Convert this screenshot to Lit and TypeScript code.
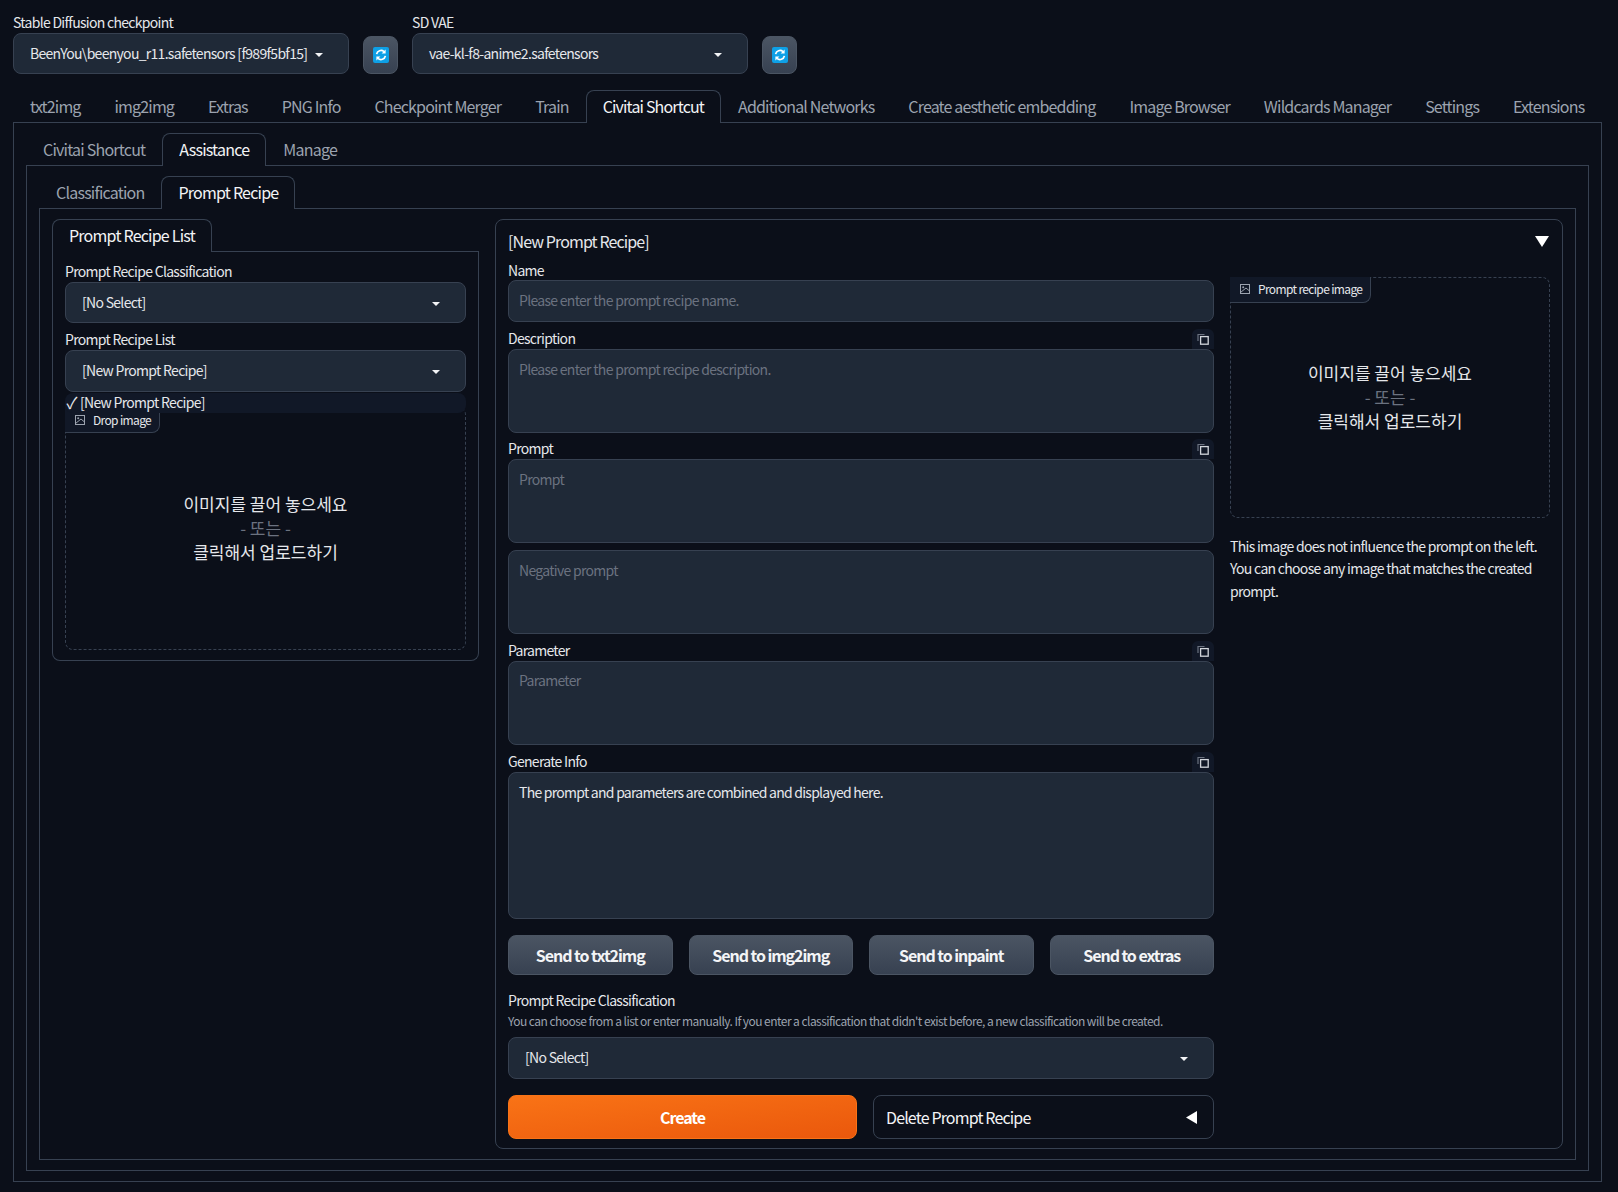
import { LitElement, html, css } from "lit";
import { customElement } from "lit/decorators.js";

const refresh = html`<svg class="rf" viewBox="0 0 16 16" width="16" height="16" aria-hidden="true">
  <rect x="0" y="0" width="16" height="16" rx="2" fill="#0ea0e6"/>
  <path d="M3.6 7.2a4.5 4.5 0 0 1 7.4-2.6" fill="none" stroke="#fff" stroke-width="1.7"/>
  <path d="M12.6 2.4v4.2H8.6z" fill="#fff"/>
  <path d="M12.4 8.8a4.5 4.5 0 0 1-7.4 2.6" fill="none" stroke="#fff" stroke-width="1.7"/>
  <path d="M3.4 13.6V9.4h4z" fill="#fff"/>
</svg>`;

const copyIcon = html`<svg class="cp" viewBox="0 0 12 12" width="12" height="12" aria-hidden="true">
  <path d="M1 8V1.5h6.5" fill="none" stroke="#6b7280" stroke-width="1.2"/>
  <rect x="3.6" y="3.6" width="7.6" height="7.6" fill="none" stroke="#d1d5db" stroke-width="1.3"/>
</svg>`;

const imgIcon = html`<svg class="im" viewBox="0 0 12 12" width="12" height="12" aria-hidden="true">
  <rect x="1.5" y="1.5" width="9" height="9" fill="none" stroke="#9ca3af" stroke-width="1"/>
  <circle cx="4.2" cy="4.2" r="1" fill="#9ca3af"/>
  <path d="M1.5 9.5 L7 5 L10.5 8" fill="none" stroke="#9ca3af" stroke-width="1"/>
</svg>`;

@customElement("app-root")
export class AppRoot extends LitElement {
  static styles = css`
    :host {
      display: block;
      min-height: 1192px;
      box-sizing: border-box;
      background: #0b0f19;
      color: #e5e7eb;
      font-family: "Noto Sans CJK KR", "Noto Sans", sans-serif;
      font-size: 14px;
      letter-spacing: -0.7px;
      padding: 11px 16px 0 13px;
    }
    * { box-sizing: border-box; }
    .top { display: flex; align-items: flex-end; gap: 14px; height: 63px; margin-bottom: 16px; }
    .top .lbl { line-height: 18px; }
    .topfield { width: 336px; }
    .lbl { display: block; height: 20px; line-height: 20px; font-size: 14px; color: #e5e7eb; white-space: nowrap; }
    .lbl.tall { height: 21px; }
    .select {
      position: relative;
      display: flex; align-items: center;
      height: 41px;
      padding: 0 16px 1px;
      background: #1f2937;
      border: 1px solid #374151;
      border-radius: 8px;
      font-size: 14px;
      color: #e5e7eb;
      white-space: nowrap;
    }
    .top .select { padding-bottom: 2px; }
    .select.h42 { height: 42px; padding-bottom: 3px; }
    .caret {
      width: 0; height: 0;
      border-left: 4px solid transparent;
      border-right: 4px solid transparent;
      border-top: 4px solid #f3f4f6;
      position: absolute; right: 25px; top: 50%; margin-top: -1px;
    }
    .rbtn {
      width: 35px; height: 38px;
      display: flex; align-items: center; justify-content: center;
      background: linear-gradient(to bottom, #4b5563, #374151);
      border: 1px solid #4b5563;
      border-radius: 8px;
    }
    .nav { display: flex; border-bottom: 1px solid #374151; height: 33px; }
    .tab {
      height: 33px;
      padding: 0 16px;
      border: 1px solid transparent;
      border-bottom: none;
      border-radius: 8px 8px 0 0;
      font-size: 16px;
      letter-spacing: -0.78px;
      line-height: 31px;
      color: #9ca3af;
      white-space: nowrap;
    }
    .nav.main-nav .tab { letter-spacing: -0.84px; }
    .tab.on { color: #f3f4f6; border-color: #374151; background: #0b0f19; }
    .panel {
      border: 1px solid #374151;
      border-top: none;
      padding: 10px 12px;
    }
    .cols { display: flex; gap: 16px; align-items: flex-start; }
    .left { width: 427px; flex: none; }
    .left .panel { border-radius: 0 0 8px 8px; padding: 9px 12px 10px; height: 409px; }
    .mt6 { margin-top: 6px; }
    .mt5 { margin-top: 5px; }
    .mt7 { margin-top: 7px; }
    .wrap { position: relative; }
    .menu {
      position: absolute; left: 0; right: 0; top: 43px; z-index: 2;
      height: 20px;
      background: #111827;
      border-radius: 8px;
      font-size: 14px; line-height: 18px;
      display: flex;
      color: #e5e7eb;
      white-space: nowrap;
    }
    .check { width: 14px; text-align: center; flex: none; font-size: 16px; letter-spacing: 0; margin-right: 1px; }
    .drop {
      position: relative;
      border: 1px dashed #374151;
      border-radius: 8px;
      padding-bottom: 1px;
      display: flex; flex-direction: column; align-items: center; justify-content: center;
      font-size: 17px; line-height: 24px; color: #e5e7eb;
      letter-spacing: 0;
    }
    .drop.l { height: 243px; margin-top: 15px; }
    .drop.r { height: 241px; }
    .or { color: #6b7280; }
    .tag {
      position: absolute; left: -1px; top: -1px;
      height: 26px;
      display: flex; align-items: center; gap: 7px;
      padding: 0 8px 0 9px;
      background: #111827;
      border: 1px solid #374151;
      border-left: none; border-top: none;
      border-radius: 0 0 8px 0;
      font-size: 12px; line-height: 16px; color: #e5e7eb;
      letter-spacing: -0.65px;
      white-space: nowrap;
    }
    .drop.l .tag { padding-top: 1px; }
    .drop.r .tag { padding-bottom: 1px; }
    .im { display: block; }
    .card {
      flex: 1; min-width: 0;
      border: 1px solid #374151;
      border-radius: 8px;
      padding: 9px 12px 9px;
    }
    .title { display: flex; justify-content: space-between; align-items: center; height: 24px; margin-bottom: 7px; font-size: 16px; letter-spacing: -0.9px; }
    .tri { display: block; margin-right: 1px; }
    .body { display: flex; gap: 16px; align-items: flex-start; }
    .main { width: 706px; flex: none; display: flex; flex-direction: column; }
    .side { width: 320px; flex: none; padding-top: 17px; }
    .note { margin-top: 17px; line-height: 22.4px; font-size: 14px; color: #e5e7eb; }
    .box {
      background: #1f2937;
      border: 1px solid #374151;
      border-radius: 8px;
      padding: 8px 10px;
      font-size: 14px;
      line-height: 22px;
      color: #6b7280;
    }
    .box.val { color: #e5e7eb; letter-spacing: -0.74px; }
    .box.up { padding-top: 7px; }
    .h42 { height: 42px; }
    .h84 { height: 84px; }
    .h147 { height: 147px; }
    .fld { position: relative; }
    .copy {
      position: absolute; right: 0; top: 1px;
      width: 22px; height: 20px;
      display: flex; align-items: center; justify-content: center;
      background: #111827;
      border-radius: 6px 6px 0 0;
    }
    .cp { display: block; }
    .btns { display: flex; gap: 16px; margin-top: 16px; }
    .btn {
      flex: 1; height: 40px;
      display: flex; align-items: center; justify-content: center;
      background: linear-gradient(to bottom, #4b5563, #374151);
      border: 1px solid #4b5563;
      border-radius: 8px;
      font-size: 16px; font-weight: 700; color: #f3f4f6;
      letter-spacing: -1.05px;
      white-space: nowrap;
    }
    .stacked { margin-top: 15px; }
    .info { height: 21px; line-height: 21px; font-size: 12px; color: #9ca3af; margin-bottom: 6px; white-space: nowrap; letter-spacing: -0.55px; }
    .actions { display: flex; gap: 16px; margin-top: 16px; }
    .create {
      width: 349px; flex: none; height: 44px;
      display: flex; align-items: center; justify-content: center;
      background: linear-gradient(to bottom right, #f97316, #ea580c);
      border: 1px solid #f97316;
      border-radius: 8px;
      font-size: 16px; font-weight: 700; color: #fff;
      letter-spacing: -1.05px;
    }
    .delete {
      flex: 1; height: 44px;
      display: flex; align-items: center; justify-content: space-between;
      padding: 0 16px 0 12px;
      border: 1px solid #374151;
      border-radius: 8px;
      font-size: 16px; color: #f3f4f6;
      letter-spacing: -0.85px;
    }
  `;

  private copyBtn() {
    return html`<div class="copy">${copyIcon}</div>`;
  }

  private dropText() {
    return html`<div>이미지를 끌어 놓으세요</div><div class="or">- 또는 -</div><div>클릭해서 업로드하기</div>`;
  }

  render() {
    const mainTabs = ["txt2img", "img2img", "Extras", "PNG Info", "Checkpoint Merger", "Train", "Civitai Shortcut", "Additional Networks", "Create aesthetic embedding", "Image Browser", "Wildcards Manager", "Settings", "Extensions"];
    return html`
      <div class="top">
        <div class="topfield">
          <span class="lbl">Stable Diffusion checkpoint</span>
          <div class="select">BeenYou\\beenyou_r11.safetensors [f989f5bf15]<i class="caret"></i></div>
        </div>
        <div class="rbtn">${refresh}</div>
        <div class="topfield">
          <span class="lbl">SD VAE</span>
          <div class="select">vae-kl-f8-anime2.safetensors<i class="caret"></i></div>
        </div>
        <div class="rbtn">${refresh}</div>
      </div>
      <div class="nav main-nav">
        ${mainTabs.map((t) => html`<div class="tab ${t === "Civitai Shortcut" ? "on" : ""}">${t}</div>`)}
      </div>
      <div class="panel">
        <div class="nav">
          <div class="tab">Civitai Shortcut</div>
          <div class="tab on">Assistance</div>
          <div class="tab">Manage</div>
        </div>
        <div class="panel">
          <div class="nav">
            <div class="tab">Classification</div>
            <div class="tab on">Prompt Recipe</div>
          </div>
          <div class="panel">
            <div class="cols">
              <div class="left">
                <div class="nav"><div class="tab on">Prompt Recipe List</div></div>
                <div class="panel">
                  <span class="lbl tall">Prompt Recipe Classification</span>
                  <div class="select">[No Select]<i class="caret"></i></div>
                  <div class="mt6">
                    <span class="lbl tall">Prompt Recipe List</span>
                    <div class="wrap">
                      <div class="select h42">[New Prompt Recipe]<i class="caret"></i></div>
                      <div class="menu"><span class="check">✓</span>[New Prompt Recipe]</div>
                    </div>
                  </div>
                  <div class="drop l">
                    <div class="tag">${imgIcon}Drop image</div>
                    ${this.dropText()}
                  </div>
                </div>
              </div>
              <div class="card">
                <div class="title">[New Prompt Recipe]
                  <svg class="tri" width="14" height="11" viewBox="0 0 14 11" aria-hidden="true"><polygon points="0,0 14,0 7,11" fill="#fff"/></svg>
                </div>
                <div class="body">
                  <div class="main">
                    <span class="lbl">Name</span>
                    <div class="box h42">Please enter the prompt recipe name.</div>
                    <div class="fld mt6">
                      <span class="lbl tall">Description</span>${this.copyBtn()}
                      <div class="box h84">Please enter the prompt recipe description.</div>
                    </div>
                    <div class="fld mt5">
                      <span class="lbl tall">Prompt</span>${this.copyBtn()}
                      <div class="box h84">Prompt</div>
                    </div>
                    <div class="box h84 mt7">Negative prompt</div>
                    <div class="fld mt6">
                      <span class="lbl tall">Parameter</span>${this.copyBtn()}
                      <div class="box up h84">Parameter</div>
                    </div>
                    <div class="fld mt6">
                      <span class="lbl tall">Generate Info</span>${this.copyBtn()}
                      <div class="box val h147">The prompt and parameters are combined and displayed here.</div>
                    </div>
                    <div class="btns">
                      <div class="btn">Send to txt2img</div>
                      <div class="btn">Send to img2img</div>
                      <div class="btn">Send to inpaint</div>
                      <div class="btn">Send to extras</div>
                    </div>
                    <span class="lbl stacked">Prompt Recipe Classification</span>
                    <div class="info">You can choose from a list or enter manually. If you enter a classification that didn't exist before, a new classification will be created.</div>
                    <div class="select h42">[No Select]<i class="caret"></i></div>
                    <div class="actions">
                      <div class="create">Create</div>
                      <div class="delete">Delete Prompt Recipe
                        <svg width="11" height="13" viewBox="0 0 11 13" aria-hidden="true"><polygon points="11,0 11,13 0,6.5" fill="#fff"/></svg>
                      </div>
                    </div>
                  </div>
                  <div class="side">
                    <div class="drop r">
                      <div class="tag">${imgIcon}Prompt recipe image</div>
                      ${this.dropText()}
                    </div>
                    <div class="note">This image does not influence the prompt on the left. You can choose any image that matches the created prompt.</div>
                  </div>
                </div>
              </div>
            </div>
          </div>
        </div>
      </div>
    `;
  }
}
